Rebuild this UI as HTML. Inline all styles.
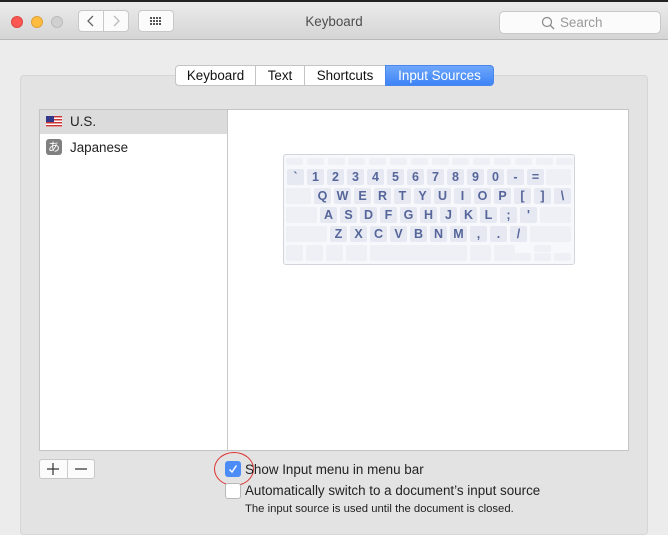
<!DOCTYPE html>
<html><head><style>
*{margin:0;padding:0;box-sizing:border-box}
body{width:668px;height:525px;background:#ececec;font-family:"Liberation Sans","Noto Sans CJK JP",sans-serif;font-size:13.4px;color:#222;position:relative;overflow:hidden}
.a{position:absolute}
#tb{left:0;top:0;width:668px;height:40px;background:linear-gradient(#ebebeb,#d5d5d5);border-bottom:1px solid #b8b8b8;border-top:2px solid #222}
.dot{width:12px;height:12px;border-radius:50%;top:14px}
.btn{background:#fbfbfb;border:1px solid #c8c8c8;border-radius:4px}
#grp{left:20px;top:75px;width:628px;height:460px;background:#e3e3e3;border:1px solid #d6d6d6;border-radius:4px}
.tab{top:65px;height:21px;background:#fff;border:1px solid #c4c4c4;font-size:13.4px;text-align:center;line-height:19px;color:#111}
.k{position:absolute;height:16px;background:#e6e9f2;border-radius:2px;color:#56659a;font-weight:bold;font-size:12.5px;text-align:center;line-height:16px;width:17px}
.k.e{background:#eef0f5}
</style></head><body>
<div id="tb" class="a">
<div class="a dot" style="left:11px;background:#fc5753;border:1px solid #de4440"></div>
<div class="a dot" style="left:31px;background:#fdbc40;border:1px solid #dea236"></div>
<div class="a dot" style="left:51px;background:#d0d0d0;border:1px solid #bbb"></div>
<div class="a btn" style="left:78px;top:8px;width:26px;height:22px;border-radius:4px 0 0 4px"><svg width="24" height="20"><path d="M14 5L9 10L14 15" stroke="#666" stroke-width="1.3" fill="none"/></svg></div>
<div class="a btn" style="left:103px;top:8px;width:26px;height:22px;border-radius:0 4px 4px 0"><svg width="24" height="20"><path d="M10 5L15 10L10 15" stroke="#bbb" stroke-width="1.3" fill="none"/></svg></div>
<div class="a btn" style="left:138px;top:8px;width:36px;height:22px"><svg width="34" height="20"><g fill="#555"><rect x="11" y="6" width="2" height="2"/><rect x="14" y="6" width="2" height="2"/><rect x="17" y="6" width="2" height="2"/><rect x="20" y="6" width="2" height="2"/><rect x="11" y="9" width="2" height="2"/><rect x="14" y="9" width="2" height="2"/><rect x="17" y="9" width="2" height="2"/><rect x="20" y="9" width="2" height="2"/><rect x="11" y="12" width="2" height="2"/><rect x="14" y="12" width="2" height="2"/><rect x="17" y="12" width="2" height="2"/><rect x="20" y="12" width="2" height="2"/></g></svg></div>
<div class="a" style="left:0;width:668px;top:12px;text-align:center;color:#4d4d4d;font-size:13.4px">Keyboard</div>
<div class="a btn" style="left:499px;top:9px;width:162px;height:23px;border-radius:5px;color:#999;font-size:13.4px;line-height:21px;padding-left:60px">Search</div>
<svg class="a" style="left:540px;top:13px" width="16" height="16"><circle cx="7" cy="7" r="4.5" stroke="#888" stroke-width="1.2" fill="none"/><path d="M10.3 10.3L14 14" stroke="#888" stroke-width="1.3"/></svg>
</div>
<div id="grp" class="a"></div>
<div class="a tab" style="left:175px;width:81px;border-radius:4px 0 0 4px">Keyboard</div>
<div class="a tab" style="left:255px;width:50px">Text</div>
<div class="a tab" style="left:304px;width:82px">Shortcuts</div>
<div class="a tab" style="left:385px;width:109px;background:linear-gradient(#6ea7fb,#3e84f6);color:#fff;border-color:#4a86ec;border-radius:0 4px 4px 0">Input Sources</div>
<div class="a" style="left:39px;top:109px;width:590px;height:342px;background:#fff;border:1px solid #c4c4c4"></div>
<div class="a" style="left:227px;top:110px;width:1px;height:340px;background:#c8c8c8"></div>
<div class="a" style="left:40px;top:110px;width:187px;height:24px;background:#dcdcdc"></div>
<div class="a" style="left:46px;top:116px;width:16px;height:11px;background:repeating-linear-gradient(#c33 0 1.5px,#fff 1.5px 3px)"><div style="width:8px;height:6px;background:#33378a"></div></div>
<div class="a" style="left:70px;top:114px">U.S.</div>
<div class="a" style="left:46px;top:139px;width:16px;height:16px;background:#808080;border-radius:3px;color:#fff;font-size:12px;line-height:16px;text-align:center">あ</div>
<div class="a" style="left:70px;top:140px">Japanese</div>
<div class="a" style="left:283px;top:154px;width:292px;height:111px;background:#f7f8fb;border:1px solid #d2d5dc;border-radius:3px"></div>
<div id="kb"></div>
<div class="a btn" style="left:39px;top:459px;width:56px;height:20px;border-radius:3px"></div>
<div class="a" style="left:67px;top:460px;width:1px;height:18px;background:#ccc"></div>
<svg class="a" style="left:39px;top:459px" width="56" height="20"><path d="M14 4V16M8 10H20M36 10H48" stroke="#333" stroke-width="1.2"/></svg>
<div class="a" style="left:225px;top:461px;width:16px;height:16px;background:#4c8cf7;border-radius:3px"><svg width="16" height="16"><path d="M4.5 8.5L7 11L11.5 4.5" stroke="#fff" stroke-width="1.4" fill="none"/></svg></div>
<div class="a" style="left:214px;top:452px;width:40px;height:34px;border:1px solid #d33;border-radius:50%"></div>
<div class="a" style="left:245px;top:462px">Show Input menu in menu bar</div>
<div class="a" style="left:225px;top:483px;width:16px;height:16px;background:#fff;border:1px solid #b8b8b8;border-radius:3px"></div>
<div class="a" style="left:245px;top:483px">Automatically switch to a document’s input source</div>
<div class="a" style="left:245px;top:503px;font-size:11.3px">The input source is used until the document is closed.</div>
<script>
var kb=document.getElementById('kb'),h='';
function k(x,y,w,t,hh){h+='<div class="k'+(t?'':' e')+'" style="left:'+x+'px;top:'+y+'px;width:'+w+'px'+(hh?';height:'+hh+'px':'')+'">'+(t||'')+'</div>';}
for(var i=0;i<14;i++)k(286+i*20.8,158,17,'',7);
var r1='`1234567890-=';for(i=0;i<13;i++)k(287+i*20,169,17,r1[i]);k(546,169,25,'');
k(286,188,25,'');var r2='QWERTYUIOP[]\\';for(i=0;i<13;i++)k(314+i*20,188,17,r2[i]);
k(286,207,31,'');var r3="ASDFGHJKL;'";for(i=0;i<11;i++)k(320+i*20,207,17,r3[i]);k(540,207,31,'');
k(286,226,41,'');var r4='ZXCVBNM,./';for(i=0;i<10;i++)k(330+i*20,226,17,r4[i]);k(530,226,41,'');
k(286,245,17,'');k(306,245,17,'');k(326,245,17,'');k(346,245,21,'');k(370,245,97,'');k(470,245,21,'');k(494,245,21,'');k(514,253,17,'',8);k(534,245,17,'',7);k(534,253,17,'',8);k(554,253,17,'',8);
kb.innerHTML=h;
</script>
</body></html>
